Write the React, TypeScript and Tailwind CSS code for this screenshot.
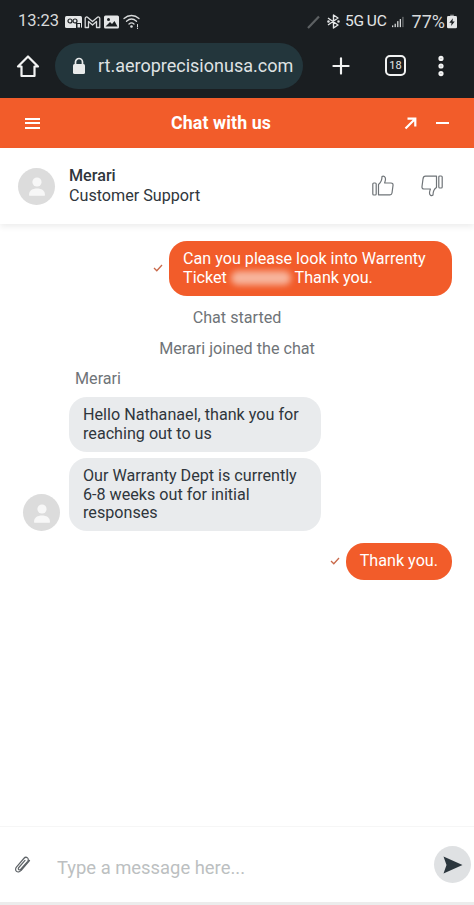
import { MoreVertical, Plus } from 'lucide-react';

function StatusBar() {
  return (
    <div className="flex h-[42px] items-center pl-[18px] pr-[17px] pt-[1px] text-[#d8dadb]">
      <span className="text-[16.5px] leading-none">13:23</span>
      <svg className="ml-[6px]" width="17" height="14" viewBox="0 0 17 14">
        <rect x="0" y="1" width="17" height="12" rx="1.5" fill="#e4e6e7" />
        <circle cx="5" cy="6" r="2" fill="none" stroke="#1a1e21" strokeWidth="1.2" />
        <circle cx="10" cy="6" r="2" fill="none" stroke="#1a1e21" strokeWidth="1.2" />
        <rect x="11" y="8" width="5" height="5" fill="#1a1e21" />
        <rect x="12.5" y="9" width="2.5" height="3.5" fill="#e4e6e7" />
      </svg>
      <svg className="ml-[2px]" width="17" height="14" viewBox="0 0 17 14" fill="none" stroke="#d8dadb" strokeWidth="1.3">
        <path d="M1.2 3.5C1.2 2 2.8 1.5 3.8 2.4L8.5 6.5L13.2 2.4C14.2 1.5 15.8 2 15.8 3.5V12.5H12.5V6.5L8.5 10L4.5 6.5V12.5H1.2Z" strokeLinejoin="round" />
      </svg>
      <svg className="ml-[3px]" width="15" height="14" viewBox="0 0 15 14">
        <rect x="0" y="0.5" width="15" height="13" rx="1.5" fill="#e4e6e7" />
        <circle cx="4.5" cy="4.5" r="1.5" fill="#1a1e21" />
        <path d="M1.5 11.5L6 7L8 9L10.5 6L13.5 11.5Z" fill="#1a1e21" />
      </svg>
      <svg className="ml-[4px]" width="18" height="15" viewBox="0 0 18 15" fill="none" stroke="#d8dadb" strokeWidth="1.3" strokeLinecap="round">
        <path d="M1 4.5C5.5 .5 11.5 .5 16 4.5" />
        <path d="M3.5 7.2C6.5 4.6 10.5 4.6 13.5 7.2" />
        <path d="M6 10C7.6 8.6 9.4 8.6 11 10" />
        <circle cx="8.5" cy="12.5" r=".7" fill="#d8dadb" />
        <path d="M14.5 10.5v2.5M14.5 14.4v.2" strokeWidth="1" />
      </svg>
      <svg className="ml-auto" width="13" height="14" viewBox="0 0 13 14" fill="none" stroke="#5d6163" strokeWidth="2.2">
        <path d="M1 13L12 1.5" />
      </svg>
      <svg className="ml-[7px]" width="13" height="15" viewBox="0 0 13 15" fill="none" stroke="#e4e6e7" strokeWidth="1.4">
        <path d="M1 4L11 11L6.5 14V1L11 4L1 11" strokeLinejoin="round" />
        <circle cx="1.5" cy="7.5" r=".6" fill="#e4e6e7" />
        <circle cx="11.5" cy="7.5" r=".6" fill="#e4e6e7" />
      </svg>
      <span className="ml-[5px] text-[15.5px] leading-none tracking-[-0.2px] text-[#e4e6e7]">5G</span>
      <span className="ml-[3px] text-[15.5px] leading-none tracking-[-0.2px] text-[#e4e6e7]">UC</span>
      <svg className="ml-[5px]" width="12" height="12" viewBox="0 0 14 12" fill="#d8dadb">
        <rect x="0" y="10" width="1.5" height="2" />
        <rect x="3" y="8" width="1.5" height="4" />
        <rect x="6" y="5" width="1.5" height="7" />
        <rect x="9" y="2.5" width="1.5" height="9.5" />
        <rect x="12" y="0" width="1.5" height="12" fill="#6a6e70" />
      </svg>
      <span className="ml-[8px] text-[18px] leading-none">77%</span>
      <svg className="ml-[2px]" width="10" height="15" viewBox="0 0 11 15">
        <rect x="3.5" y="0" width="4" height="2" fill="#8a8d8f" />
        <rect x="0" y="1.5" width="11" height="13.5" rx="1.5" fill="#e4e6e7" />
        <path d="M6.5 4L2.5 9H5L4.5 12.5L8.5 7.5H6Z" fill="#1a1e21" />
      </svg>
    </div>
  );
}

function BrowserBar() {
  return (
    <div className="flex h-[56px] items-center pb-[9px]">
      <svg className="ml-[16px]" width="24" height="24" viewBox="0 0 24 24" fill="none" stroke="#f2f3f3" strokeWidth="2.2" strokeLinejoin="round">
        <path d="M2 12.5L12 2.5L22 12.5H18.5V22H5.5V12.5Z" />
      </svg>
      <div className="ml-[15px] flex h-[46px] w-[248px] items-center rounded-full bg-[#23363c] pl-[17px]">
        <svg width="14" height="18" viewBox="0 0 14 18">
          <path d="M3.5 7V5a3.5 3.5 0 0 1 7 0v2" fill="none" stroke="#e8eaea" strokeWidth="1.7" />
          <rect x="1" y="7" width="12" height="10" rx="1.5" fill="#e8eaea" />
        </svg>
        <span className="ml-[12px] text-[18px] leading-none text-[#dfe2e3]">rt.aeroprecisionusa.com</span>
      </div>
      <Plus className="ml-[25px]" size={26} color="#f2f3f3" strokeWidth={2} />
      <div className="ml-[31px] flex h-[21px] w-[21px] items-center justify-center rounded-[5px] border-2 border-[#f2f3f3] text-[11px] leading-none text-[#e4e6e7]">
        18
      </div>
      <MoreVertical className="ml-[22px]" size={26} color="#f2f3f3" strokeWidth={2.8} />
    </div>
  );
}

function Avatar({ size }: { size: string }) {
  return (
    <div className={`flex shrink-0 items-center justify-center rounded-full bg-[#dcdcdc] ${size}`}>
      <svg width="22" height="22" viewBox="0 0 22 22" fill="#f7f7f7">
        <circle cx="11" cy="7" r="4.6" />
        <path d="M3 20c0-4.5 3.5-6.5 8-6.5s8 2 8 6.5c0 .6-.4.8-1 .8H4c-.6 0-1-.2-1-.8Z" />
      </svg>
    </div>
  );
}

function Check() {
  return (
    <svg className="mr-[6px] mb-[1px] shrink-0" width="10" height="8" viewBox="0 0 10 8" fill="none" stroke="#c9694a" strokeWidth="1.3">
      <path d="M1 4L3.8 6.8L9 1" />
    </svg>
  );
}

function ChatHeader() {
  return (
    <div className="flex h-[50px] items-center bg-[#f25c2a] text-white">
      <div className="ml-[25px] flex w-[15px] flex-col gap-[2.5px]">
        <div className="h-[2px] bg-white" />
        <div className="h-[2px] bg-white" />
        <div className="h-[2px] bg-white" />
      </div>
      <span className="ml-[131px] text-[17.8px] font-bold leading-none tracking-[0.1px]">Chat with us</span>
      <svg className="ml-[133px]" width="13" height="13" viewBox="0 0 13 13" fill="none" stroke="#fff" strokeWidth="2.2">
        <path d="M1.5 11.5L11 2M3.5 1.7H11.3V9.5" />
      </svg>
      <div className="ml-[19px] h-[2.5px] w-[13px] bg-white" />
    </div>
  );
}

function AgentRow() {
  return (
    <div className="relative flex h-[76px] items-center bg-white pl-[18px] shadow-[0_3px_6px_rgba(0,0,0,0.07)]">
      <Avatar size="h-[37px] w-[37px]" />
      <div className="ml-[14px] text-[16.15px] leading-[20px] text-[#2f363c]">
        <div className="font-medium">Merari</div>
        <div>Customer Support</div>
      </div>
      <svg className="ml-auto" width="22" height="22" viewBox="0 0 22 22" fill="none" stroke="#6f7478" strokeWidth="1.2" strokeLinejoin="round">
        <rect x="0.8" y="8" width="3.4" height="12" rx="1" />
        <path d="M6.5 19.8V9.5C9 7.5 10 4.5 10 1.5C11.5.5 13.5 1.5 13.5 4C13.5 5.5 13 6.5 12.6 8H19C20.5 8 21.2 9 21 10.5L20 18C19.8 19.2 19 19.8 18 19.8Z" />
      </svg>
      <svg className="ml-[27px] mr-[31px]" width="22" height="22" viewBox="0 0 22 22" fill="none" stroke="#6f7478" strokeWidth="1.2" strokeLinejoin="round">
        <rect x="17.8" y="1" width="3.4" height="12" rx="1" />
        <path d="M15.5 1.2V12.5C13 14 12 17 12 20C10.5 21.3 8.5 20.3 8.5 18C8.5 16.5 9 15.5 9.4 14H3C1.5 14 .8 13 1 11.5L2 4C2.2 2.5 3 1.2 4.5 1.2Z" />
      </svg>
    </div>
  );
}

function Messages() {
  return (
    <div className="flex flex-1 flex-col pt-[17px] text-[16.15px] leading-[18.5px]">
      <div className="mr-[22px] flex items-center justify-end">
        <Check />
        <div className="w-[283px] rounded-[18px] bg-[#f25c2a] px-[14px] py-[9px] text-white">
          Can you please look into Warrenty
          <br />
          Ticket{' '}
          <span className="inline-block h-[14px] w-[60px] translate-y-[2px] rounded-full bg-[#f7b49c] blur-[3px]" />{' '}
          Thank you.
        </div>
      </div>
      <div className="mt-[13px] text-center leading-[18px] text-[#6f7478]">Chat started</div>
      <div className="mt-[13px] text-center leading-[18px] text-[#6f7478]">Merari joined the chat</div>
      <div className="ml-[75px] mt-[12px] leading-[18px] text-[#6f7478]">Merari</div>
      <div className="ml-[69px] mt-[9px] w-[252px] rounded-[18px] bg-[#e9ebed] px-[14px] py-[9px] text-[#2f363c]">
        Hello Nathanael, thank you for
        <br />
        reaching out to us
      </div>
      <div className="ml-[23px] mt-[6px] flex items-end gap-[9px]">
        <Avatar size="h-[37px] w-[37px]" />
        <div className="w-[252px] rounded-[18px] bg-[#e9ebed] px-[14px] pt-[9px] pb-[8.5px] text-[#2f363c]">
          Our Warranty Dept is currently
          <br />
          6-8 weeks out for initial
          <br />
          responses
        </div>
      </div>
      <div className="mr-[22px] mt-[12px] flex items-center justify-end">
        <Check />
        <div className="rounded-[18px] bg-[#f25c2a] px-[14px] py-[9px] text-white">Thank you.</div>
      </div>
    </div>
  );
}

function Composer() {
  return (
    <div className="flex h-[76px] items-center border-t border-[#f6f6f6] bg-white">
      <svg className="ml-[14px]" width="18" height="18" viewBox="0 0 18 18" fill="none" stroke="#5f6468" strokeWidth="1.2" strokeLinecap="round">
        <path d="M15.5 4.5L7 14.5C5.8 16 3.8 16.5 2.5 15.4C1.2 14.3 1.3 12.3 2.6 10.8L9.8 2.5C10.8 1.3 12.4 1 13.5 1.9C14.6 2.8 14.5 4.4 13.5 5.6L6.8 13.2C6.2 13.9 5.3 14.1 4.7 13.6C4.1 13.1 4.2 12.2 4.8 11.5L11 4.4" />
      </svg>
      <span className="ml-[25px] mt-[7px] text-[18.4px] leading-none text-[#bcbfc1]">Type a message here...</span>
      <div className="ml-auto mr-[3px] flex h-[37px] w-[37px] items-center justify-center rounded-full bg-[#dfe1e3]">
        <svg width="20" height="18" viewBox="0 0 20 18" fill="#2b363d">
          <path d="M.5 .5L19.5 9L.5 17.5L3.5 9Z" />
        </svg>
      </div>
    </div>
  );
}

export default function App() {
  return (
    <div className="flex h-[905px] w-[474px] flex-col overflow-hidden bg-white font-['Roboto',sans-serif]">
      <div className="bg-[#1a1e21]">
        <StatusBar />
        <BrowserBar />
      </div>
      <ChatHeader />
      <AgentRow />
      <Messages />
      <Composer />
      <div className="h-[3px] bg-[#ececec]" />
    </div>
  );
}
